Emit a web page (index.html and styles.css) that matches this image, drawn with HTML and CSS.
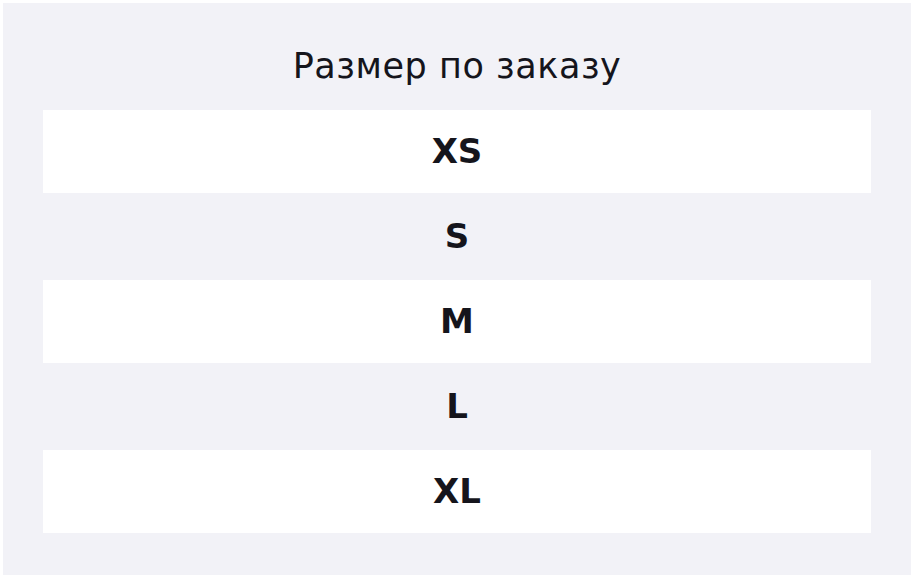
FILE: index.html
```html
<!doctype html>
<html>
  <head>
    <meta charset="utf-8">
    <title>Размер по заказу</title>
    <link rel="stylesheet" href="styles.css">
  </head>

  <body>
    <div class="sizePanel">
      <h2 class="sizeTitle">Размер по заказу</h2>

      <div class="sizeList">
        <div class="sizeRow light">XS</div>
        <div class="sizeRow">S</div>
        <div class="sizeRow light">M</div>
        <div class="sizeRow">L</div>
        <div class="sizeRow light">XL</div>
      </div>
    </div>
  </body>
</html>
```

FILE: styles.css
```css
body {
  margin:3px;
  background-color:#ffffff;
  font-family:"DejaVu Sans", sans-serif;
  color:#15151c;
}

.sizePanel {
  height:572px;
  box-sizing:border-box;
  background-color:#f2f2f7;
  padding:43px 40px 42px 40px;
}

.sizeTitle {
  margin:0 0 24px 0;
  font-size:35px;
  font-weight:400;
  letter-spacing:0.55px;
  line-height:40px;
  text-align:center;
}

.sizeList {
  display:flex;
  flex-direction:column;
}

.sizeRow {
  height:87px;
  line-height:87px;
  font-size:34px;
  font-weight:700;
  text-align:center;
}

.sizeRow.light {
  height:83px;
  line-height:83px;
  background-color:#ffffff;
}
```
